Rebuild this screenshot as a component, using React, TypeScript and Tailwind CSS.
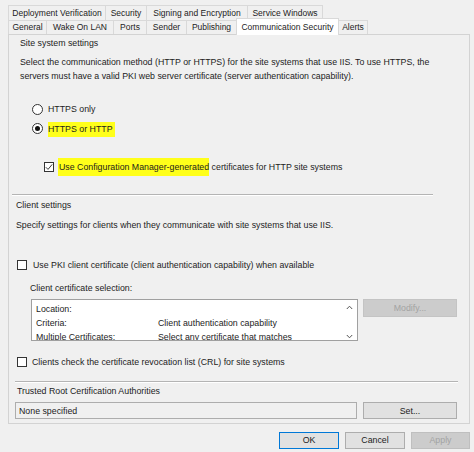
import React from "react";

const row1 = [
  { label: "Deployment Verification", w: "w-[98px]" },
  { label: "Security", w: "w-[42px]" },
  { label: "Signing and Encryption", w: "w-[102px]" },
  { label: "Service Windows", w: "w-[76px]" },
];

const row2 = [
  { label: "General", w: "w-[39px]" },
  { label: "Wake On LAN", w: "w-[68px]" },
  { label: "Ports", w: "w-[34px]" },
  { label: "Sender", w: "w-[41px]" },
  { label: "Publishing", w: "w-[51px]" },
  { label: "Communication Security", w: "w-[103px]", selected: true },
  { label: "Alerts", w: "w-[30px]" },
];

function Check({ checked }: { checked?: boolean }) {
  return (
    <span className="w-[10px] h-[10px] border border-[#333] bg-white flex items-center justify-center shrink-0">
      {checked && (
        <svg width="8" height="8" viewBox="0 0 8 8">
          <path d="M0.8 4.2 L3 6.4 L7.2 1.4" fill="none" stroke="#222" strokeWidth="0.9" />
        </svg>
      )}
    </span>
  );
}

function Radio({ checked }: { checked?: boolean }) {
  return (
    <span className="w-[11px] h-[11px] rounded-full border border-[#333] bg-white flex items-center justify-center shrink-0">
      {checked && <span className="w-[5px] h-[5px] rounded-full bg-[#111]" />}
    </span>
  );
}

function Chevron({ up }: { up?: boolean }) {
  return (
    <svg width="7" height="5" viewBox="0 0 7 5">
      <path
        d={up ? "M0.8 4 L3.5 1.2 L6.2 4" : "M0.8 1 L3.5 3.8 L6.2 1"}
        fill="none"
        stroke="#555"
        strokeWidth="1"
      />
    </svg>
  );
}

export default function App() {
  return (
    <div className="w-[474px] h-[452px] overflow-hidden bg-[#f0f0f0] pt-[5px] text-[8.8px] text-[#1c1c1c] font-['Liberation_Sans',Arial,sans-serif]">
      {/* tab rows */}
      <div className="flex h-[15px] pl-[8px] text-[8.5px]">
        {row1.map((t) => (
          <div
            key={t.label}
            className={`${t.w} -ml-px first:ml-0 flex items-center justify-center border border-b-0 border-[#d9d9d9] whitespace-nowrap`}
          >
            {t.label}
          </div>
        ))}
      </div>
      <div className="flex items-end h-[14px] pl-[8px] text-[8.5px]">
        {row2.map((t) =>
          t.selected ? (
            <div
              key={t.label}
              className={`${t.w} h-[17px] -mb-px -ml-px relative z-10 bg-white flex items-center justify-center border border-b-0 border-[#d9d9d9] whitespace-nowrap`}
            >
              {t.label}
            </div>
          ) : (
            <div
              key={t.label}
              className={`${t.w} h-[14px] -ml-px first:ml-0 flex items-center justify-center border border-b-0 border-[#d9d9d9] whitespace-nowrap`}
            >
              {t.label}
            </div>
          )
        )}
      </div>

      {/* tab page */}
      <div className="ml-[8px] w-[462px] h-[390px] border border-[#d3d3d3] flex flex-col leading-[14px]">
        <div className="mt-[1px] pl-[11px] h-[14px]">Site system settings</div>
        <div className="mt-[5px] pl-[11px] whitespace-nowrap">
          Select the communication method (HTTP or HTTPS) for the site systems that use IIS. To use HTTPS, the
          <br />
          servers must have a valid PKI web server certificate (server authentication capability).
        </div>

        <div className="mt-[19px] pl-[23px] h-[14px] flex items-center gap-[5px]">
          <Radio />
          <span>HTTPS only</span>
        </div>
        <div className="mt-[5px] pl-[23px] h-[14px] flex items-center gap-[5px]">
          <Radio checked />
          <span className="bg-[#ffff1a] leading-[15px] mt-[3px] pr-[2px]">HTTPS or HTTP</span>
        </div>

        <div className="mt-[25px] pl-[35px] h-[14px] flex items-center gap-[4px] whitespace-nowrap">
          <Check checked />
          <span>
            <span className="bg-[#ffff1a] inline-block leading-[18px] pl-[1px]">
              Use Configuration Manager-generated
            </span>{" "}
            certificates for HTTP site systems
          </span>
        </div>

        <div className="mt-[20px] ml-[3px] w-[421px] h-[2px] border-t border-[#b4b4b4] border-b border-b-white" />

        <div className="mt-[2px] pl-[7px] h-[14px]">Client settings</div>
        <div className="mt-[6px] pl-[7px] h-[14px] whitespace-nowrap">
          Specify settings for clients when they communicate with site systems that use IIS.
        </div>

        <div className="mt-[26px] pl-[8px] h-[14px] flex items-center gap-[6px] whitespace-nowrap">
          <Check />
          <span>Use PKI client certificate (client authentication capability) when available</span>
        </div>

        <div className="mt-[9px] pl-[21px] h-[14px]">Client certificate selection:</div>

        <div className="mt-[4px] flex items-start">
          <div className="ml-[22px] w-[327px] h-[42px] border border-[#a0a0a0] bg-white flex overflow-hidden">
            <div className="flex-1 pl-[4px] pt-[2px] whitespace-nowrap">
              <div className="flex h-[14px]">
                <span className="w-[122px]">Location:</span>
              </div>
              <div className="flex h-[14px]">
                <span className="w-[122px]">Criteria:</span>
                <span>Client authentication capability</span>
              </div>
              <div className="flex h-[14px]">
                <span className="w-[122px]">Multiple Certificates:</span>
                <span>Select any certificate that matches</span>
              </div>
            </div>
            <div className="w-[16px] flex flex-col justify-between items-center pt-[5px] pb-[1px]">
              <Chevron up />
              <Chevron />
            </div>
          </div>
          <div className="ml-[5px] w-[94px] h-[18px] bg-[#cccccc] border border-[#c4c4c4] text-[#a3a3a3] flex items-center justify-center">
            Modify...
          </div>
        </div>

        <div className="mt-[14px] pl-[8px] h-[14px] flex items-center gap-[5px] whitespace-nowrap">
          <Check />
          <span>Clients check the certificate revocation list (CRL) for site systems</span>
        </div>

        <div className="mt-[12px] ml-[6px] w-[443px] h-[2px] border-t border-[#b4b4b4] border-b border-b-white" />

        <div className="mt-[1px] pl-[8px] h-[14px]">Trusted Root Certification Authorities</div>

        <div className="mt-[4px] flex items-center">
          <div className="ml-[6px] w-[342px] h-[17px] border border-[#adadad] bg-[#f0f0f0] pl-[3px] flex items-center">
            None specified
          </div>
          <div className="ml-[6px] w-[94px] h-[17px] bg-[#e1e1e1] border border-[#adadad] flex items-center justify-center">
            Set...
          </div>
        </div>
      </div>

      {/* dialog buttons */}
      <div className="mt-[8px] pr-[4px] flex justify-end gap-[6px]">
        <div className="w-[60px] h-[17px] bg-[#e1e1e1] border border-[#0078d7] flex items-center justify-center">
          OK
        </div>
        <div className="w-[60px] h-[17px] bg-[#e1e1e1] border border-[#adadad] flex items-center justify-center">
          Cancel
        </div>
        <div className="w-[59px] h-[17px] bg-[#cccccc] border border-[#bfbfbf] text-[#a3a3a3] flex items-center justify-center">
          Apply
        </div>
      </div>
    </div>
  );
}
